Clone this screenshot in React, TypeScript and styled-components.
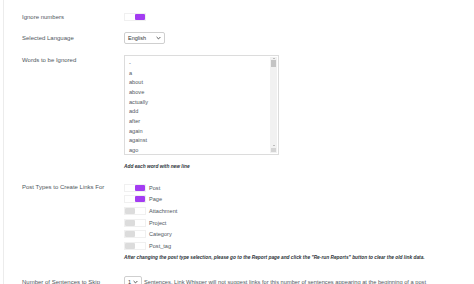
import React from "react";
import styled, { createGlobalStyle } from "styled-components";

const Global = createGlobalStyle`
  html, body { margin: 0; padding: 0; background: #fff; }
  body { font-family: "Liberation Sans", Arial, sans-serif; color: #50575e; }
`;

const Frame = styled.div`
  margin-left: 3px;
  border-left: 1px solid #ececec;
  padding: 13px 0 0 18px;
  height: 284px;
  box-sizing: border-box;
  overflow: hidden;
`;

const Row = styled.div<{ $mt?: number }>`
  display: grid;
  grid-template-columns: 102px 1fr;
  align-items: start;
  margin-top: ${(p) => p.$mt ?? 0}px;
`;

const Label = styled.div<{ $lh?: number; $pt?: number }>`
  font-size: 6px;
  line-height: ${(p) => p.$lh ?? 8}px;
  padding-top: ${(p) => p.$pt ?? 0}px;
  color: #50575e;
  white-space: nowrap;
`;

const Field = styled.div`
  display: flex;
  flex-direction: column;
  align-items: flex-start;
  min-width: 0;
`;

const Track = styled.div<{ $on: boolean }>`
  width: 22px;
  height: 8px;
  box-sizing: border-box;
  border: 1px solid #f0f0f0;
  background: #fff;
  display: flex;
  justify-content: ${(p) => (p.$on ? "flex-end" : "flex-start")};
  align-items: stretch;
  flex-shrink: 0;
`;

const Knob = styled.div<{ $on: boolean }>`
  width: 10px;
  background: ${(p) => (p.$on ? "#a33cf2" : "#dcdcdc")};
  border-radius: 1px;
`;

const Toggle = ({ on }: { on: boolean }) => (
  <Track $on={on}>
    <Knob $on={on} />
  </Track>
);

const SelectBox = styled.div<{ $w: number }>`
  width: ${(p) => p.$w}px;
  height: 12px;
  box-sizing: border-box;
  border: 1px solid #cfcfcf;
  border-radius: 2px;
  display: flex;
  align-items: center;
  justify-content: space-between;
  padding: 0 3px 0 3px;
  font-size: 5.5px;
  color: #333;
  background: #fff;
  flex-shrink: 0;
`;

const Chevron = () => (
  <svg width="5" height="4" viewBox="0 0 5 4">
    <path d="M0.6 1 L2.5 2.9 L4.4 1" fill="none" stroke="#444" strokeWidth="0.9" />
  </svg>
);

const TextArea = styled.div`
  width: 155px;
  height: 100px;
  box-sizing: border-box;
  border: 1px solid #dcdcdc;
  display: flex;
  background: #fff;
`;

const Words = styled.div`
  flex: 1;
  padding: 3px 0 0 4px;
  font-size: 5.6px;
  line-height: 9.65px;
  color: #50575e;
  overflow: hidden;
`;

const Scroll = styled.div`
  width: 7px;
  margin: 1px 1px 1px 0;
  background: #f1f1f1;
  display: flex;
  flex-direction: column;
  align-items: center;
`;

const Arrow = styled.div<{ $down?: boolean }>`
  width: 0;
  height: 0;
  margin-top: ${(p) => (p.$down ? "auto" : "1px")};
  border-left: 1.5px solid transparent;
  border-right: 1.5px solid transparent;
  ${(p) =>
    p.$down ? "border-top: 1.5px solid #888;" : "border-bottom: 1.5px solid #888;"}
`;

const Thumb = styled.div`
  width: 5px;
  height: 7px;
  margin-top: 1px;
  background: #c4c4c4;
`;

const Grip = styled.div`
  width: 5px;
  height: 4px;
  margin: 2px 0 1px;
  background: #d4d4d4;
`;

const Hint = styled.div<{ $mt: number }>`
  margin-top: ${(p) => p.$mt}px;
  font-size: 4.8px;
  line-height: 8px;
  font-weight: bold;
  font-style: italic;
  color: #2c3338;
  white-space: nowrap;
`;

const TypeList = styled.div`
  display: flex;
  flex-direction: column;
`;

const TypeItem = styled.div`
  height: 11.6px;
  display: flex;
  align-items: center;
  gap: 3px;
  font-size: 5.6px;
  color: #50575e;
`;

const Inline = styled.div`
  display: flex;
  align-items: center;
  gap: 2px;
  font-size: 5.7px;
  color: #50575e;
  white-space: nowrap;
`;

const words = ["-", "a", "about", "above", "actually", "add", "after", "again", "against", "ago"];
const types: [string, boolean][] = [
  ["Post", true],
  ["Page", true],
  ["Attachment", false],
  ["Project", false],
  ["Category", false],
  ["Post_tag", false],
];

export default function App() {
  return (
    <>
      <Global />
      <Frame>
        <Row>
          <Label>Ignore numbers</Label>
          <Field>
            <Toggle on />
          </Field>
        </Row>
        <Row $mt={11}>
          <Label $lh={12}>Selected Language</Label>
          <Field>
            <SelectBox $w={41}>
              <span>English</span>
              <Chevron />
            </SelectBox>
          </Field>
        </Row>
        <Row $mt={11}>
          <Label $pt={1}>Words to be Ignored</Label>
          <Field>
            <TextArea>
              <Words>
                {words.map((w) => (
                  <div key={w}>{w}</div>
                ))}
              </Words>
              <Scroll>
                <Arrow />
                <Thumb />
                <Arrow $down />
                <Grip />
              </Scroll>
            </TextArea>
            <Hint $mt={8}>Add each word with new line</Hint>
          </Field>
        </Row>
        <Row $mt={11}>
          <Label $lh={11.6}>Post Types to Create Links For</Label>
          <Field>
            <TypeList>
              {types.map(([t, on]) => (
                <TypeItem key={t}>
                  <Toggle on={on} />
                  <span>{t}</span>
                </TypeItem>
              ))}
            </TypeList>
            <Hint $mt={2}>
              After changing the post type selection, please go to the Report page and click the "Re-run Reports" button to clear the old link data.
            </Hint>
          </Field>
        </Row>
        <Row $mt={14}>
          <Label $lh={12}>Number of Sentences to Skip</Label>
          <Field>
            <Inline>
              <SelectBox $w={18}>
                <span>1</span>
                <Chevron />
              </SelectBox>
              <span>
                Sentences. Link Whisper will not suggest links for this number of sentences appearing at the beginning of a post
              </span>
            </Inline>
          </Field>
        </Row>
      </Frame>
    </>
  );
}
